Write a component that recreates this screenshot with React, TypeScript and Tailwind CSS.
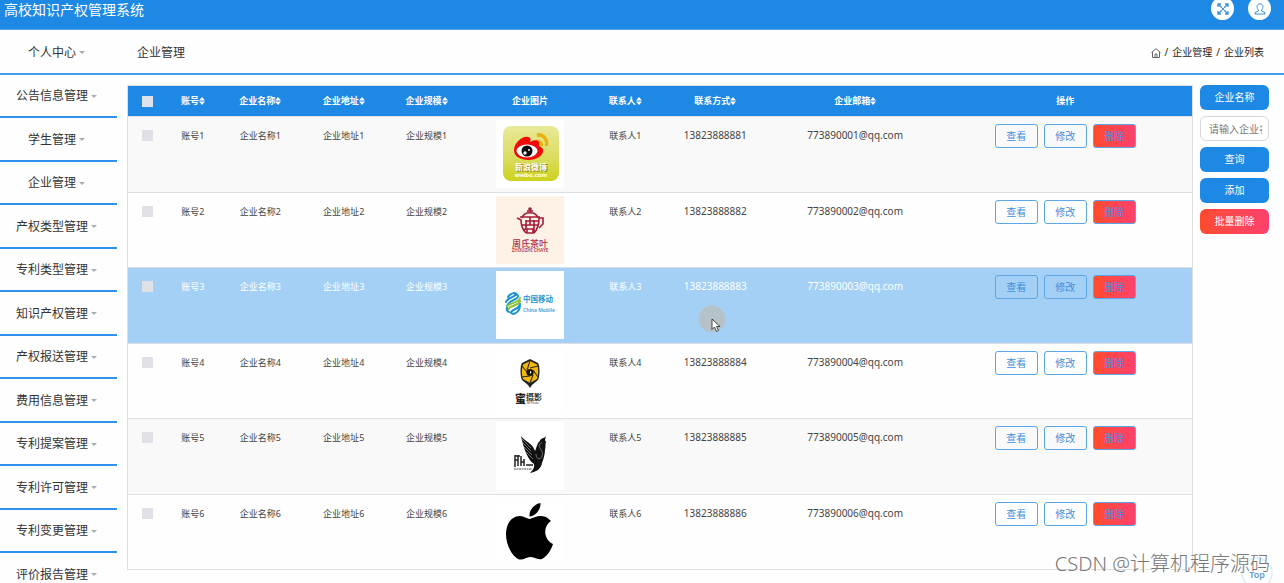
import type { ReactNode } from "react";

const menu = [
  "公告信息管理", "学生管理", "企业管理", "产权类型管理", "专利类型管理", "知识产权管理",
  "产权报送管理", "费用信息管理", "专利提案管理", "专利许可管理", "专利变更管理", "评价报告管理",
];

const columns = [
  { label: "账号", sort: true },
  { label: "企业名称", sort: true },
  { label: "企业地址", sort: true },
  { label: "企业规模", sort: true },
  { label: "企业图片", sort: false },
  { label: "联系人", sort: true },
  { label: "联系方式", sort: true },
  { label: "企业邮箱", sort: true },
  { label: "操作", sort: false },
];

function Caret() {
  return (
    <svg className="h-[3px] w-[6px] shrink-0" viewBox="0 0 6 3" aria-hidden="true">
      <path d="M0 0H6L3 3Z" fill="#a9adb3" />
    </svg>
  );
}

function SortIcon() {
  return (
    <svg className="h-2 w-[6px] shrink-0" viewBox="0 0 6 8" aria-hidden="true">
      <path d="M3 0L6 3.4H0ZM0 4.6H6L3 8Z" fill="#fff" />
    </svg>
  );
}

function Weibo() {
  return (
    <svg className="size-[68px]" viewBox="0 0 68 68" role="img" aria-label="新浪微博">
      <defs>
        <linearGradient id="wb" x1="0" y1="0" x2="0" y2="1">
          <stop offset="0" stopColor="#e9e99a" />
          <stop offset="0.6" stopColor="#d9dc5c" />
          <stop offset="1" stopColor="#cdd21c" />
        </linearGradient>
      </defs>
      <rect width="68" height="68" fill="#fff" />
      <rect x="7" y="6" width="56" height="55" rx="8" fill="url(#wb)" />
      <path d="M41 13C48 12 54 18 52 26L49 26C50 20 46 16 41 17Z" fill="#e9b211" />
      <path d="M40 20C44 19 48 22 47 26L44 26C44 23 43 22 40 23Z" fill="#e9b211" />
      <path d="M18 30C18 23 27 15 32 17C35 17 35 20 34 22C39 19 45 20 43 26C49 28 48 34 43 37C36 42 18 41 18 30Z" fill="#f30808" />
      <ellipse cx="31" cy="31" rx="10.5" ry="6.5" fill="#fff" />
      <circle cx="31" cy="31" r="5.5" fill="#080808" />
      <circle cx="29" cy="33" r="1.7" fill="#fff" />
      <circle cx="33" cy="30" r="1" fill="#fff" />
      <text x="36" y="51" textAnchor="middle" fontSize="8" fontWeight="700" fill="#85862e">新浪微博</text>
      <text x="35" y="50" textAnchor="middle" fontSize="8" fontWeight="700" fill="#fff" aria-hidden="true">新浪微博</text>
      <text x="35" y="57" textAnchor="middle" fontSize="6" fontWeight="700" fill="#fff">weibo.com</text>
    </svg>
  );
}

function Tea() {
  return (
    <svg className="size-[68px]" viewBox="0 0 68 68" role="img" aria-label="周氏茶叶">
      <rect width="68" height="68" rx="1" fill="#fef1e6" />
      <g fill="none" stroke="#a51c37" strokeWidth="1.6">
        <path d="M21 22L25 24C25 29 27 34 30 37M26 22C28 15 40 15 42 22M43 22C43 29 41 34 38 37M24 21H44M43 22H47V28L43 32M30 24V32L28 35M38 24V37M30 25H43M34 21V29M26 29H42M31 33H37V37H31Z" />
        <path d="M31 15H37" />
        <circle cx="34" cy="13" r="1" fill="#a51c37" />
      </g>
      <text x="34" y="51" textAnchor="middle" fontSize="9" fontWeight="500" fill="#ad3047">周氏茶叶</text>
      <text x="34" y="56" textAnchor="middle" fontSize="4.5" fontWeight="700" fill="#b8475a">ZHOUZHI CHAYE</text>
    </svg>
  );
}

function Mobile() {
  return (
    <svg className="size-[68px]" viewBox="0 0 68 68" role="img" aria-label="中国移动">
      <rect width="68" height="68" fill="#fff" />
      <g fill="none" strokeWidth="2" strokeLinecap="round">
        <path d="M12 26C15 21 20 21 22 25C23 28 12 30 11 35M10 31C10 28 20 25 19 24" stroke="#1b92cf" />
        <path d="M11 36C13 31 24 32 24 27M12 39C13 34 23 35 24 30" stroke="#8ac43f" />
        <path d="M24 33C23 39 15 38 15 42C19 45 24 39 24 35M11 37C10 39 12 41 13 41" stroke="#1b92cf" />
      </g>
      <text x="27" y="31" fontSize="7.5" fontWeight="700" fill="#2294cc">中国移动</text>
      <text x="27" y="41" fontSize="5" fontWeight="600" fill="#37a1d3">China Mobile</text>
    </svg>
  );
}

function Photo() {
  return (
    <svg className="size-[68px]" viewBox="0 0 68 68" role="img" aria-label="蜜摄影">
      <rect width="68" height="68" fill="#fff" />
      <path d="M34 12L42 16C44 18 44 30 42 33L36 38L34 41L32 38L26 33C24 30 24 18 26 16Z" fill="#222" />
      <path d="M34 14L41 17.5C42.5 20 42.5 29 41 32L34 36L27 32C25.5 29 25.5 20 27 17.5Z" fill="#f2b90d" />
      <path d="M34 14L31 23M42 19L34 21M42 30L37 23M34 36L37 28M26 30L34 29M26 19L31 25" stroke="#332a0c" strokeWidth="1.1" />
      <circle cx="34" cy="25.5" r="3.6" fill="#161208" />
      <path d="M34 23.5L35.5 25.5L34 27Z" fill="#fff" />
      <text x="19" y="56" fontSize="11" fontWeight="900" fill="#222">蜜</text>
      <text x="30" y="53" fontSize="8" fontWeight="700" fill="#333">摄影</text>
      <text x="31" y="57" fontSize="3" fill="#333">M Photo</text>
    </svg>
  );
}

function Bird() {
  return (
    <svg className="size-[68px]" viewBox="0 0 68 68" role="img" aria-label="飞鸟">
      <rect width="68" height="68" fill="#fff" />
      <path d="M25 14C29 20 36 20 39 29C41 25 41 21 44 19C44 16 48 17 50 14L49 18L50 20C49 22 50 24 49 28C49 33 47 38 46 41C45 47 40 50 34 51C37 48 39 45 38 42C32 38 28 28 25 14Z" fill="#111" />
      <path d="M26 17L35 26M27 21L35 29M28 25L36 33M30 30L37 37" stroke="#fff" strokeWidth="0.4" />
      <path d="M40 32C40 38 45 38 46 34C48 29 43 27 43 23L46 20" fill="none" stroke="#aaa" strokeWidth="0.6" />
      <path d="M19 33V45M22 33V44M25 34V44M19 34H24M19 38H22M28 37V44M28 40H25M30 43H37" fill="none" stroke="#222" strokeWidth="1.5" />
      <path d="M18 47H36" stroke="#555" strokeWidth="1" strokeDasharray="2 0.5" />
    </svg>
  );
}

function Apple() {
  return (
    <svg className="size-[68px]" viewBox="0 0 68 68" role="img" aria-label="Apple">
      <rect width="68" height="68" fill="#fff" />
      <path d="M44.5 5C45 11 40 18 33.5 18.5C33 12 38 6 44.5 5Z" />
      <path d="M34 21C37 20 40 18 45 18C50 18 53 21 55 23C47 28 47 41 57 46C55 53 50 59 46 61C41 62 38 59 34 59C30 59 27 63 22 61C16 58 10 47 10 36C10 25 16 18 24 18C28 18 31 21 34 21Z" />
    </svg>
  );
}

const pictures: ReactNode[] = [<Weibo />, <Tea />, <Mobile />, <Photo />, <Bird />, <Apple />];
const active = 3;

const rowButton = "flex h-6 w-[43px] cursor-pointer items-center justify-center rounded-[3px] border border-[#5aa6e6] text-[10px] text-[#3f8fe0]";
const sideButton = "flex h-[25px] w-full items-center justify-center rounded-md text-[10px] text-white";

export default function App() {
  return (
    <div className="relative flex h-screen flex-col overflow-hidden bg-[#fefefe] font-['Noto_Sans','Noto_Sans_CJK_SC',sans-serif] text-[#333]">
      <header className="flex h-[30px] shrink-0 items-start justify-between border-b border-[#55a5ec] bg-[#1e88e5] pr-[13px] pl-1">
        <h1 className="text-sm leading-5 text-white">高校知识产权管理系统</h1>
        <div className="-mt-[3px] flex gap-[14px]">
          <button aria-label="全屏" className="flex size-[23px] items-center justify-center rounded-full bg-white text-[#3d8fd8]">
            <svg className="size-3" viewBox="0 0 12 12" fill="none" stroke="currentColor" aria-hidden="true">
              <path d="M1 4V1H4M8 1H11V4M11 8V11H8M4 11H1V8M1 1L4.8 4.8M11 1L7.2 4.8M1 11L4.8 7.2M11 11L7.2 7.2" strokeWidth="1.3" />
              <path d="M4.800 4.800L7.200 7.200M7.200 4.800L4.800 7.200" strokeWidth="1" />
            </svg>
          </button>
          <button aria-label="用户" className="flex size-[23px] items-center justify-center rounded-full bg-white text-[#3d8fd8]">
            <svg className="size-3" viewBox="0 0 12 12" fill="none" stroke="currentColor" aria-hidden="true">
              <path d="M6 0.8C9.8 0.8 9.5 5.5 7.5 7V8L11 9.5V11H1V9.5L4.5 8V7C2.5 5.5 2.2 0.8 6 0.8Z" />
            </svg>
          </button>
        </div>
      </header>

      <div className="flex h-[45px] shrink-0 items-center border-b-2 border-[#3f9cf0] pt-[2px] pr-5">
        <a href="#me" className="flex w-[117px] shrink-0 items-center justify-center gap-[3px] pr-1 text-xs">
          个人中心
          <Caret />
        </a>
        <h2 className="pl-5 text-xs">企业管理</h2>
        <nav aria-label="面包屑" className="ml-auto flex items-center gap-1 text-[10px] text-[#222]">
          <a href="#home" aria-label="首页">
            <svg className="size-[10px]" viewBox="0 0 10 10" fill="none" stroke="#666" aria-hidden="true">
              <path d="M0.5 4.5L5 0.7L9.5 4.5M1.5 4V9.5H8.5V4M4 9V6H6V9" />
            </svg>
          </a>
          <span>/</span>
          <a href="#company">企业管理</a>
          <span>/</span>
          <span>企业列表</span>
        </nav>
      </div>

      <div className="flex min-h-0 flex-1 items-start">
        <nav aria-label="主菜单" className="w-[117px] shrink-0">
          <ul>
            {menu.map((item) => (
              <li key={item} className="border-b-2 border-[#2f92ee] odd:h-[43px] even:h-11">
                <a href={"#" + item} className="flex h-full items-center justify-center gap-[3px] pt-px pr-1 text-xs">
                  {item}
                  <Caret />
                </a>
              </li>
            ))}
          </ul>
        </nav>

        <main className="flex min-w-0 flex-1 items-start gap-[7px] pt-[10px] pr-[15px] pl-[10px]">
          <table className="min-w-0 flex-1 table-fixed border-collapse border border-[#dcdfe3] text-center">
            <colgroup>
              <col className="w-[40px]" />
              <col className="w-[51px]" />
              <col className="w-[84px]" />
              <col className="w-[83px]" />
              <col className="w-[83px]" />
              <col className="w-[124px]" />
              <col className="w-[67px]" />
              <col className="w-[113px]" />
              <col className="w-[167px]" />
              <col className="w-[254px]" />
            </colgroup>
            <thead>
              <tr className="h-[31px] bg-[#1e88e5] text-[9px] text-white">
                <th>
                  <input type="checkbox" aria-label="全选" className="mx-auto block size-[11px] appearance-none bg-[#dce3ec]" />
                </th>
                {columns.map((c) => (
                  <th key={c.label} className="font-bold">
                    <span className="flex items-center justify-center">
                      {c.label}
                      {c.sort && <SortIcon />}
                    </span>
                  </th>
                ))}
              </tr>
            </thead>
            <tbody>
              {pictures.map((picture, i) => {
                const n = i + 1;
                return (
                  <tr
                    key={n}
                    className={
                      "border-t border-[#dcdfe3] align-top text-[9px] leading-[14px] odd:h-[76px] even:h-[75px] " +
                      (n === active ? "bg-[#a4d0f5] text-white" : "text-[#444] odd:bg-[#f9f9f9]")
                    }
                  >
                    <td className="pt-[13px]">
                      <input type="checkbox" aria-label={"选择账号" + n} className="mx-auto block size-[11px] appearance-none bg-[#e0e1e6]" />
                    </td>
                    <td className="pt-3">账号{n}</td>
                    <td className="pt-3">企业名称{n}</td>
                    <td className="pt-3">企业地址{n}</td>
                    <td className="pt-3">企业规模{n}</td>
                    <td className="pt-[3px]">
                      <div className="flex justify-center">{picture}</div>
                    </td>
                    <td className="pt-3">联系人{n}</td>
                    <td className="pt-[11px] text-[10px]">1382388888{n}</td>
                    <td className="pt-[11px] text-[10px]">77389000{n}@qq.com</td>
                    <td className="pt-[7px]">
                      <div className="flex justify-center gap-[6px]">
                        <button className={rowButton}>查看</button>
                        <button className={rowButton}>修改</button>
                        <button className={rowButton + " bg-linear-to-r from-[#ff4b2b] to-[#ff416c]"}>删除</button>
                      </div>
                    </td>
                  </tr>
                );
              })}
            </tbody>
          </table>

          <form className="flex w-[69px] shrink-0 flex-col gap-[6px]" onSubmit={(e) => e.preventDefault()}>
            <label htmlFor="company" className={sideButton + " bg-[#1e88e5]"}>企业名称</label>
            <input
              id="company"
              type="text"
              placeholder="请输入企业名称"
              className="h-[25px] w-full rounded-md border border-[#d5d8dc] bg-white pr-[6px] pl-2 text-[10px] placeholder:text-[#777]"
            />
            <button type="submit" className={sideButton + " bg-[#1e88e5]"}>查询</button>
            <button type="button" className={sideButton + " bg-[#1e88e5]"}>添加</button>
            <button type="button" className={sideButton + " bg-linear-to-r from-[#ff4b2b] to-[#ff416c]"}>批量删除</button>
          </form>
        </main>
      </div>

      <svg className="pointer-events-none absolute top-[305px] left-[698px] h-[30px] w-7" viewBox="0 0 28 30" aria-hidden="true">
        <circle cx="14" cy="14" r="13.5" fill="#b5c3c9" />
        <path d="M14 14V24.5L16.5 22L18.5 26.5L20.5 25.5L18.5 21.5H22Z" fill="#fff" stroke="#333" strokeWidth="0.9" />
      </svg>

      <a href="#top" className="absolute right-[11px] -bottom-[6px] flex size-8 items-center justify-center rounded-full border-2 border-[#e3eff9] bg-white pt-1 text-[9px] font-semibold text-[#5b9bd5]">
        Top
      </a>
      <p className="pointer-events-none absolute right-[14px] bottom-[5px] text-xl leading-7 font-light text-[#777] [text-shadow:1px_1px_0_#fff]">
        CSDN @计算机程序源码
      </p>
    </div>
  );
}
